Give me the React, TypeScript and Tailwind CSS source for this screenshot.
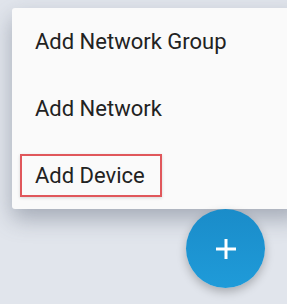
import React from 'react';

const items = ['Add Network Group', 'Add Network', 'Add Device'];

export default function App() {
  return (
    <div
      className="relative w-[287px] h-[304px] overflow-hidden bg-[#e1e5ec]"
      style={{ fontFamily: 'Roboto, "Liberation Sans", sans-serif' }}
    >
      <div className="ml-[12px] mt-[8px] w-[290px] bg-[#fafafa] rounded-l-[3px] shadow-[0_10px_22px_rgba(80,90,110,0.42)] flex flex-col">
        {items.map((label, i) => (
          <div key={label} className="h-[67px] flex items-center">
            {i === 2 ? (
              <div className="ml-[8px] h-[43px] w-[142px] border-2 border-[#e0575b] flex items-center pl-[13px] shadow-[0_1px_3px_rgba(0,0,0,0.15)]">
                <span className="text-[22px] text-[#222] leading-none">{label}</span>
              </div>
            ) : (
              <span className="ml-[23px] text-[22px] text-[#222] leading-none">{label}</span>
            )}
          </div>
        ))}
      </div>

      {/* FAB */}
      <button className="absolute left-[186px] top-[209px] w-[79px] h-[79px] rounded-full bg-gradient-to-b from-[#1a8cc9] to-[#1f9bd9] shadow-[0_4px_10px_rgba(0,0,0,0.25)] flex items-center justify-center">
        <svg width="22" height="22" viewBox="0 0 22 22">
          <path d="M11 1v20M1 11h20" stroke="#fff" strokeWidth="3" />
        </svg>
      </button>
    </div>
  );
}
